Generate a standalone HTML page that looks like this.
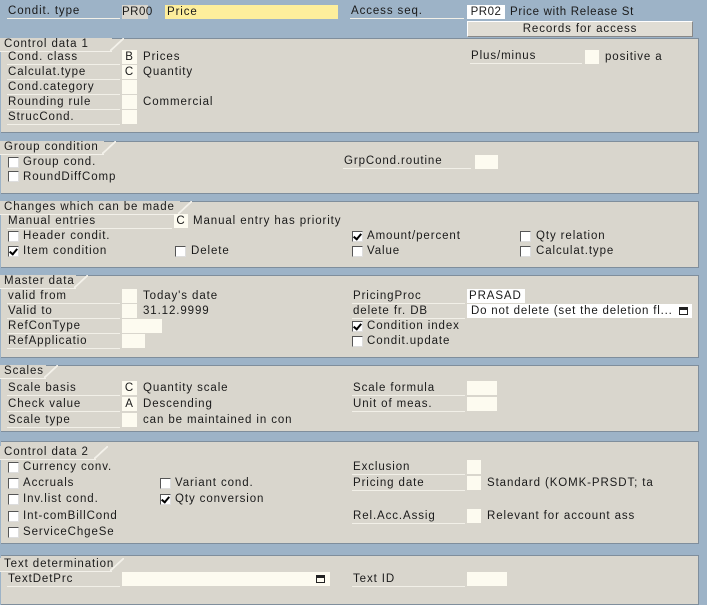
<!DOCTYPE html>
<html><head><meta charset="utf-8"><style>
body{margin:0;width:707px;height:595px;overflow:hidden;background:#9db3c7;font-family:"Liberation Sans",sans-serif;font-size:11.5px;letter-spacing:0.9px;color:#1a1a1a;position:relative}
div,span{position:absolute;box-sizing:border-box;white-space:nowrap}
.p{left:1px;width:698px;background:#d9d6cd;border:1px solid #7f8e9c;border-left:none}
.h{left:0;height:14px;padding:0 4px;line-height:13px;border-bottom:1px solid #f3f1ea;}
.h:after{content:"";position:absolute;right:-12px;top:0;width:14px;height:13px;background:linear-gradient(to bottom right,transparent 45%,#f3f1ea 46%,#f3f1ea 54%,transparent 56%)}
.l{height:14px;line-height:13px;padding-left:1px;border-bottom:1px solid #f2f0e8}
.f{height:14px;line-height:14px;background:#fdfbf0;text-align:center}
.t{height:14px;line-height:14px}
.c{width:11px;height:11px;background:#fff;border:1px solid #555;border-right-color:#ddd;border-bottom-color:#ddd}
.c.k:after{content:"";position:absolute;left:2px;top:0px;width:3px;height:6px;border:solid #000;border-width:0 2px 2px 0;transform:rotate(40deg)}
</style></head><body>
<!-- top -->
<div class="l" style="left:7px;top:5px;width:113px">Condit. type</div>
<div class="t" style="left:122px;top:5px;width:26px;background:#d9d6cd;text-align:center;letter-spacing:0.5px">PR00</div>
<div class="t" style="left:165px;top:5px;width:173px;background:#fdee9c;padding-left:2px">Price</div>
<div class="l" style="left:350px;top:5px;width:114px">Access seq.</div>
<div class="t" style="left:467px;top:5px;width:38px;background:#fff;text-align:center;letter-spacing:0.5px">PR02</div>
<div class="t" style="left:510px;top:5px;letter-spacing:0.7px">Price with Release St</div>
<div style="left:467px;top:21px;width:226px;height:16px;background:#e0ddd4;border:1px solid #888;border-top-color:#fff;border-left-color:#fff;text-align:center;line-height:14px">Records for access</div>

<!-- panel1 -->
<div class="p" style="top:38px;height:95px"></div>
<div class="h" style="top:38px;width:112px;background:#d9d6cd">Control data 1</div>
<div class="l" style="left:7px;top:51px;width:113px">Cond. class</div><div class="f" style="left:122px;top:50px;width:15px">B</div><div class="t" style="left:143px;top:50px">Prices</div>
<div class="l" style="left:7px;top:66px;width:113px">Calculat.type</div><div class="f" style="left:122px;top:65px;width:15px">C</div><div class="t" style="left:143px;top:65px">Quantity</div>
<div class="l" style="left:7px;top:81px;width:113px">Cond.category</div><div class="f" style="left:122px;top:80px;width:15px"></div>
<div class="l" style="left:7px;top:96px;width:113px">Rounding rule</div><div class="f" style="left:122px;top:95px;width:15px"></div><div class="t" style="left:143px;top:95px">Commercial</div>
<div class="l" style="left:7px;top:111px;width:113px">StrucCond.</div><div class="f" style="left:122px;top:110px;width:15px"></div>
<div class="l" style="left:470px;top:50px;width:112px">Plus/minus</div><div class="f" style="left:585px;top:50px;width:14px"></div><div class="t" style="left:605px;top:50px">positive a</div>

<!-- panel2 -->
<div class="p" style="top:141px;height:53px"></div>
<div class="h" style="top:141px;width:104px;background:#d9d6cd">Group condition</div>
<div class="c" style="left:8px;top:157px"></div><div class="t" style="left:23px;top:155px">Group cond.</div>
<div class="c" style="left:8px;top:171px"></div><div class="t" style="left:23px;top:170px">RoundDiffComp</div>
<div class="l" style="left:343px;top:155px;width:128px">GrpCond.routine</div><div class="f" style="left:475px;top:155px;width:23px"></div>

<!-- panel3 -->
<div class="p" style="top:201px;height:67px"></div>
<div class="h" style="top:201px;width:180px;background:#d9d6cd">Changes which can be made</div>
<div class="l" style="left:7px;top:215px;width:165px">Manual entries</div><div class="f" style="left:174px;top:214px;width:14px">C</div><div class="t" style="left:193px;top:214px">Manual entry has priority</div>
<div class="c" style="left:8px;top:231px"></div><div class="t" style="left:23px;top:229px">Header condit.</div>
<div class="c k" style="left:352px;top:231px"></div><div class="t" style="left:367px;top:229px">Amount/percent</div>
<div class="c" style="left:520px;top:231px"></div><div class="t" style="left:536px;top:229px">Qty relation</div>
<div class="c k" style="left:8px;top:246px"></div><div class="t" style="left:23px;top:244px">Item condition</div>
<div class="c" style="left:175px;top:246px"></div><div class="t" style="left:191px;top:244px">Delete</div>
<div class="c" style="left:352px;top:246px"></div><div class="t" style="left:367px;top:244px">Value</div>
<div class="c" style="left:520px;top:246px"></div><div class="t" style="left:536px;top:244px">Calculat.type</div>

<!-- panel4 -->
<div class="p" style="top:275px;height:83px"></div>
<div class="h" style="top:275px;width:76px;background:#d9d6cd">Master data</div>
<div class="l" style="left:7px;top:290px;width:113px">valid from</div><div class="f" style="left:122px;top:289px;width:15px"></div><div class="t" style="left:143px;top:289px">Today's date</div>
<div class="l" style="left:7px;top:305px;width:113px">Valid to</div><div class="f" style="left:122px;top:304px;width:15px"></div><div class="t" style="left:143px;top:304px">31.12.9999</div>
<div class="l" style="left:7px;top:320px;width:113px">RefConType</div><div class="f" style="left:122px;top:319px;width:40px"></div>
<div class="l" style="left:7px;top:335px;width:113px">RefApplicatio</div><div class="f" style="left:122px;top:334px;width:23px"></div>
<div class="l" style="left:352px;top:290px;width:113px">PricingProc</div><div class="t" style="left:467px;top:289px;width:58px;background:#fff;padding-left:2px">PRASAD</div>
<div class="l" style="left:352px;top:305px;width:113px">delete fr. DB</div><div class="t" style="left:467px;top:304px;width:225px;background:#fff;padding-left:4px;letter-spacing:0.8px">Do not delete (set the deletion fl...<span style="right:4px;top:3px;width:9px;height:8px;border:1px solid #222;border-top-width:3px"></span></div>
<div class="c k" style="left:352px;top:321px"></div><div class="t" style="left:367px;top:319px">Condition index</div>
<div class="c" style="left:352px;top:336px"></div><div class="t" style="left:367px;top:334px">Condit.update</div>

<!-- panel5 -->
<div class="p" style="top:365px;height:67px"></div>
<div class="h" style="top:365px;width:46px;background:#d9d6cd">Scales</div>
<div class="l" style="left:7px;top:382px;width:113px">Scale basis</div><div class="f" style="left:122px;top:381px;width:15px">C</div><div class="t" style="left:143px;top:381px">Quantity scale</div>
<div class="l" style="left:7px;top:398px;width:113px">Check value</div><div class="f" style="left:122px;top:397px;width:15px">A</div><div class="t" style="left:143px;top:397px">Descending</div>
<div class="l" style="left:7px;top:414px;width:113px">Scale type</div><div class="f" style="left:122px;top:413px;width:15px"></div><div class="t" style="left:143px;top:413px">can be maintained in con</div>
<div class="l" style="left:352px;top:382px;width:113px">Scale formula</div><div class="f" style="left:467px;top:381px;width:30px"></div>
<div class="l" style="left:352px;top:398px;width:113px">Unit of meas.</div><div class="f" style="left:467px;top:397px;width:30px"></div>

<!-- panel6 -->
<div class="p" style="top:441px;height:103px"></div>
<div class="h" style="top:446px;width:96px;background:#d9d6cd">Control data 2</div>
<div class="c" style="left:8px;top:462px"></div><div class="t" style="left:23px;top:460px">Currency conv.</div>
<div class="c" style="left:8px;top:478px"></div><div class="t" style="left:23px;top:476px">Accruals</div>
<div class="c" style="left:160px;top:478px"></div><div class="t" style="left:175px;top:476px">Variant cond.</div>
<div class="c" style="left:8px;top:494px"></div><div class="t" style="left:23px;top:492px">Inv.list cond.</div>
<div class="c k" style="left:160px;top:494px"></div><div class="t" style="left:175px;top:492px">Qty conversion</div>
<div class="c" style="left:8px;top:511px"></div><div class="t" style="left:23px;top:509px">Int-comBillCond</div>
<div class="c" style="left:8px;top:527px"></div><div class="t" style="left:23px;top:525px">ServiceChgeSe</div>
<div class="l" style="left:352px;top:461px;width:113px">Exclusion</div><div class="f" style="left:467px;top:460px;width:14px"></div>
<div class="l" style="left:352px;top:477px;width:113px">Pricing date</div><div class="f" style="left:467px;top:476px;width:14px"></div><div class="t" style="left:487px;top:476px">Standard (KOMK-PRSDT; ta</div>
<div class="l" style="left:352px;top:510px;width:113px">Rel.Acc.Assig</div><div class="f" style="left:467px;top:509px;width:14px"></div><div class="t" style="left:487px;top:509px">Relevant for account ass</div>

<!-- panel7 -->
<div class="p" style="top:555px;height:50px"></div>
<div class="h" style="top:558px;width:112px;background:#d9d6cd">Text determination</div>
<div class="l" style="left:7px;top:573px;width:113px">TextDetPrc</div><div class="f" style="left:122px;top:572px;width:208px"><span style="right:5px;top:3px;width:9px;height:8px;border:1px solid #222;border-top-width:3px"></span></div>
<div class="l" style="left:352px;top:573px;width:113px">Text ID</div><div class="f" style="left:467px;top:572px;width:40px"></div>
</body></html>
